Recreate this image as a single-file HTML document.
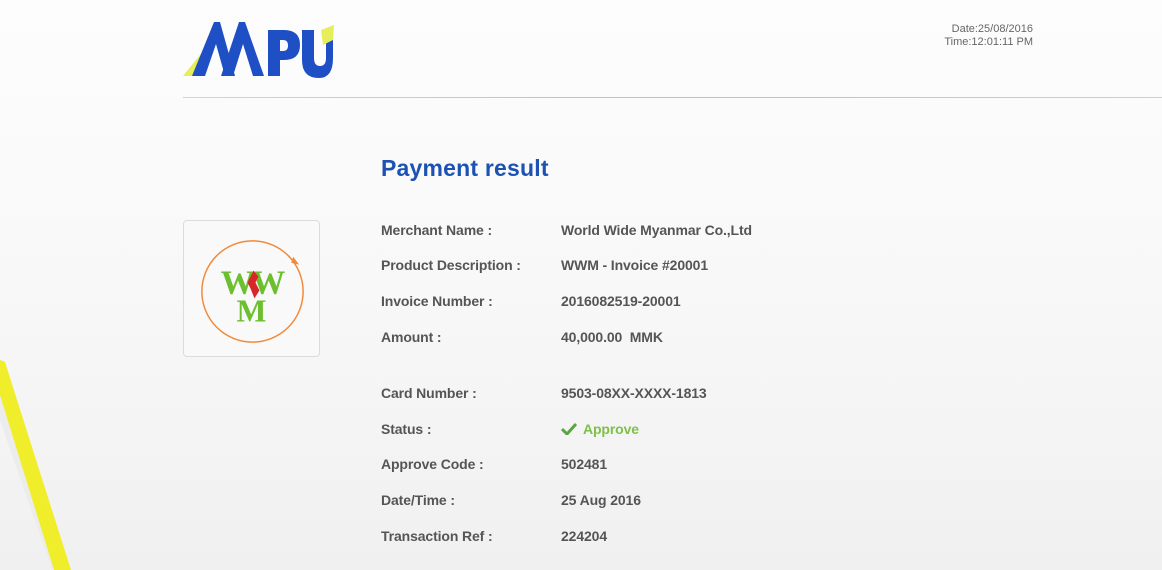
<!DOCTYPE html>
<html><head><meta charset="utf-8"><style>
html,body{margin:0;padding:0;}
body{width:1162px;height:570px;overflow:hidden;position:relative;background:linear-gradient(180deg,#fdfdfd 0%,#f8f8f8 50%,#f0f0f0 100%);font-family:"Liberation Sans",Arial,sans-serif;}
.line{position:absolute;left:183px;top:97px;width:979px;height:1px;background:linear-gradient(90deg,#d4d4d4,#b8c2c8 50%,#cfcfcf);}
.dt{position:absolute;right:129px;top:23px;font-size:11px;color:#666;text-align:right;line-height:13px;}
.title{position:absolute;left:381px;top:155px;font-size:23px;font-weight:bold;color:#1b52b3;letter-spacing:0.2px;}
.row{position:absolute;left:381px;font-size:14px;font-weight:bold;color:#555;letter-spacing:-0.12px;}
.row span{position:absolute;left:180px;white-space:nowrap;}
.row b{white-space:nowrap;font-weight:bold;}
.box{position:absolute;left:183px;top:220px;width:135px;height:135px;border:1px solid #dcdcdc;border-radius:4px;background:#f9f9f9;}
</style></head><body>
<svg style="position:absolute;left:0;top:0" width="1162" height="570">
 <polygon points="0,365 4,360 70,570 52,570 0,420" fill="#ececec"/>
 <polygon points="0,360 5,362 71,570 54,570 0,395" fill="#f0ee2a"/>
 <polygon points="183,76 204,50 212,50 199,76" fill="#e6ee59"/>
 <polygon points="192,76 214,22 220,22 235,76 225,76 216,44 205,76" fill="#1f4fc4"/>
 <polygon points="221,76 239,22 245,22 264,76 253,76 243,44 233,76" fill="#1f4fc4"/>
 <path d="M268 76 V30 H284 Q300 30 300 45 Q300 60 284 60 H280 V76 Z M280 40 V51 H283 Q288 51 288 45.5 Q288 40 283 40Z" fill="#1f4fc4" fill-rule="evenodd"/>
 <path d="M302 30 H314 V58 Q314 66 320 66 Q326 66 326 58 V30 H333 V58 Q333 78 319 78 Q302 78 302 60 Z" fill="#1f4fc4"/>
 <polygon points="321,30 334,25 333,40 323,45" fill="#e6ee59"/>
</svg>
<div class="line"></div>
<div class="dt">Date:25/08/2016<br>Time:12:01:11 PM</div>
<div class="box">
<svg width="135" height="135" viewBox="0 0 136 136">
 <circle cx="69" cy="71" r="51" fill="none" stroke="#f08a3c" stroke-width="1.5"/>
 <polygon points="110,36 116,44 108,42" fill="#f08a3c"/>
 <text x="68" y="73" text-anchor="middle" font-family="Liberation Serif,serif" font-weight="bold" font-size="34" fill="#6cbf2e" letter-spacing="-3">WW</text>
 <text x="68" y="101" text-anchor="middle" font-family="Liberation Serif,serif" font-weight="bold" font-size="32" fill="#6cbf2e">M</text>
 <path d="M70 50 l5 6 -3 6 4 8 -5 8 -4-10 -3-6z" fill="#d8262b"/>
</svg>
</div>
<div class="title">Payment result</div>
<div class="row" style="top:222px"><b>Merchant Name :</b><span>World Wide Myanmar Co.,Ltd</span></div>
<div class="row" style="top:257px"><b>Product Description :</b><span>WWM - Invoice #20001</span></div>
<div class="row" style="top:293px"><b>Invoice Number :</b><span>2016082519-20001</span></div>
<div class="row" style="top:329px"><b>Amount :</b><span>40,000.00&nbsp;&nbsp;MMK</span></div>
<div class="row" style="top:385px"><b>Card Number :</b><span>9503-08XX-XXXX-1813</span></div>
<div class="row" style="top:421px"><b>Status :</b><span style="color:#7fc04a"><svg width="16" height="12" style="vertical-align:-1px;margin-right:6px"><path d="M1 6 L6 11 L15 1" fill="none" stroke="#5aa542" stroke-width="3"/></svg>Approve</span></div>
<div class="row" style="top:456px"><b>Approve Code :</b><span>502481</span></div>
<div class="row" style="top:492px"><b>Date/Time :</b><span>25 Aug 2016</span></div>
<div class="row" style="top:528px"><b>Transaction Ref :</b><span>224204</span></div>
</body></html>
